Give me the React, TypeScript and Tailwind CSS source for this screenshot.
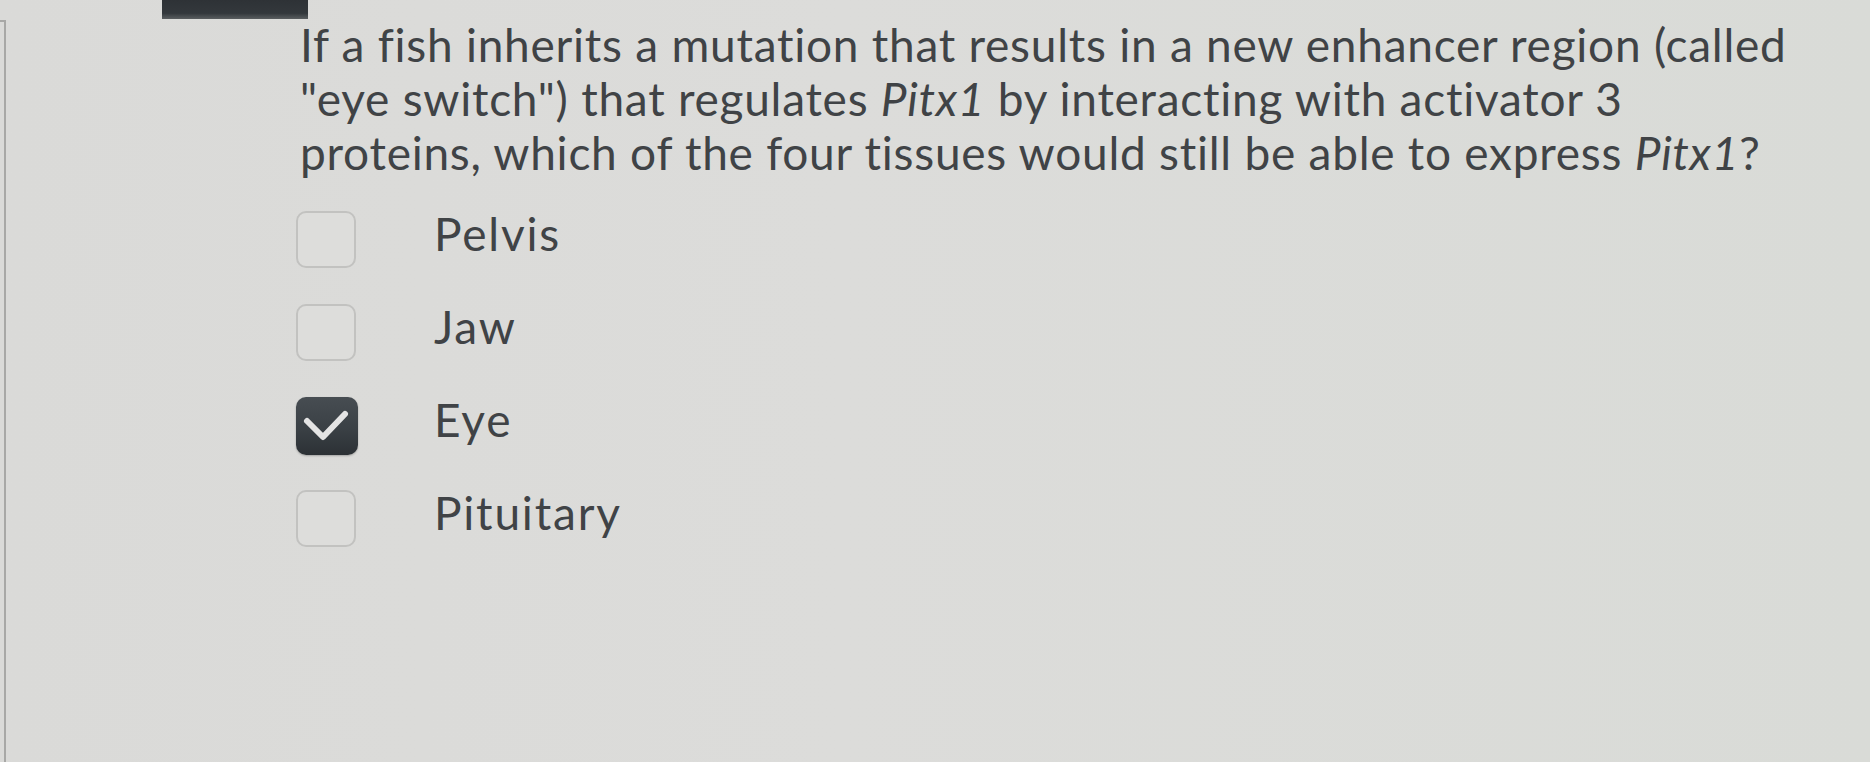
import React from "react";

const options = [
  { label: "Pelvis", checked: false },
  { label: "Jaw", checked: false },
  { label: "Eye", checked: true },
  { label: "Pituitary", checked: false },
];

function Box({ checked }: { checked: boolean }) {
  if (checked) {
    return (
      <div className="w-[62px] h-[58px] rounded-[10px] bg-[linear-gradient(180deg,#474d52_0%,#3a4045_55%,#2c3135_100%)] shadow-[0_1px_2px_rgba(0,0,0,0.25)] flex items-center justify-center">
        <svg width="62" height="58" viewBox="0 0 62 58" fill="none">
          <path
            d="M11 24 L27 40 L49 17"
            stroke="#e4e4e4"
            strokeWidth="6"
            strokeLinecap="round"
            strokeLinejoin="round"
          />
        </svg>
      </div>
    );
  }
  return (
    <div className="w-[60px] h-[57px] rounded-[10px] border-2 border-[#c2c2c0] bg-[#dddddb]" />
  );
}

export default function App() {
  return (
    <div
      className="w-[1870px] h-[762px] flex overflow-hidden bg-[linear-gradient(90deg,#dadad8_0%,#dcdcda_45%,#d9dbd7_100%)] text-[#404346]"
      style={{ fontFamily: "Lato, 'Open Sans', sans-serif" }}
    >
      <div className="w-[6px] mt-[20px] border-t-2 border-r-2 border-[#a8a8a6]" />
      <div className="flex-1 flex flex-col">
        <div className="ml-[156px] w-[146px] h-[19px] bg-[linear-gradient(180deg,#2e3236_0%,#33383c_70%,#5a5e60_100%)]" />
        <p className="ml-[294px] -mt-[1px] text-[46px] leading-[54px] tracking-[0.75px]">
          If a fish inherits a mutation that results in a new enhancer region (called
          <br />
          "eye switch") that regulates <i>Pitx1</i> by interacting with activator 3
          <br />
          proteins, which of the four tissues would still be able to express <i>Pitx1</i>?
        </p>
        <div className="ml-[290px] mt-[13px] flex flex-col">
          {options.map((o) => (
            <div key={o.label} className="h-[93px] flex items-center">
              <div className="w-[138px] flex items-center">
                <Box checked={o.checked} />
              </div>
              <span className="text-[46px] leading-[46px] tracking-[1.8px] pb-[12px]">
                {o.label}
              </span>
            </div>
          ))}
        </div>
      </div>
    </div>
  );
}
